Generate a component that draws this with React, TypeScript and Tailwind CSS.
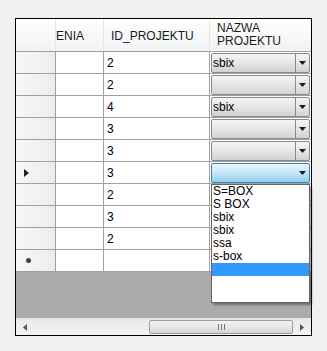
import React from "react";

const rows: { id: string; combo: string; current?: boolean; isNew?: boolean }[] = [
  { id: "2", combo: "sbix" },
  { id: "2", combo: "" },
  { id: "4", combo: "sbix" },
  { id: "3", combo: "" },
  { id: "3", combo: "" },
  { id: "3", combo: "", current: true },
  { id: "2", combo: "" },
  { id: "3", combo: "" },
  { id: "2", combo: "" },
  { id: "", combo: "", isNew: true },
];

const items = ["S=BOX", "S BOX", "sbix", "sbix", "ssa", "s-box", ""];

function Arrow() {
  return (
    <svg width="7" height="4" viewBox="0 0 7 4">
      <path d="M0 0 L7 0 L3.5 4 Z" fill="#1a1a1a" />
    </svg>
  );
}

function Combo({ text, active }: { text: string; active?: boolean }) {
  return (
    <div
      className={
        "ml-[1px] mt-[1px] h-[20px] w-[99px] flex rounded-[2px] border " +
        (active
          ? "border-[#3c7fb1] bg-gradient-to-b from-[#eaf6fd] via-[#c4e6f8] to-[#8fcbee]"
          : "border-[#8a8a8a] bg-gradient-to-b from-[#f4f4f4] via-[#e6e6e6] to-[#d2d2d2]")
      }
    >
      <div className="flex-1 flex items-center pl-[1px] text-[12px] leading-none text-black">
        {text}
      </div>
      <div
        className={
          "w-[14px] flex items-center justify-center border-l " +
          (active ? "border-transparent" : "border-[#8a8a8a]")
        }
      >
        <Arrow />
      </div>
    </div>
  );
}

export default function App() {
  return (
    <div
      className="relative w-[327px] h-[351px] bg-[#f0f0f0] pt-[18px] pl-[15px]"
      style={{ fontFamily: '"Liberation Sans", Arial, sans-serif' }}
    >
      <div className="w-[297px] h-[318px] border border-black bg-[#ababab] flex flex-col overflow-hidden">
        {/* header */}
        <div className="flex h-[33px] border-b border-[#a0a0a0] bg-gradient-to-b from-[#ffffff] to-[#f1f2f4] text-[12px] text-[#1a1a1a]">
          <div className="w-[40px] border-r border-[#e6e6e6]" />
          <div className="w-[48px] border-r border-[#e6e6e6] flex items-center">
            <span className="pt-[1px]">ENIA</span>
          </div>
          <div className="w-[106px] border-r border-[#e6e6e6] flex items-center pl-[7px] pt-[1px]">
            ID_PROJEKTU
          </div>
          <div className="w-[101px] flex flex-col justify-center pl-[7px] leading-[13px]">
            <span>NAZWA</span>
            <span>PROJEKTU</span>
          </div>
        </div>
        {/* rows */}
        {rows.map((r, i) => (
          <div key={i} className="flex h-[22px] border-b border-[#a0a0a0] bg-white text-[12px] text-black">
            <div className="w-[40px] border-r border-[#a0a0a0] bg-gradient-to-r from-[#f7f7f7] via-[#f2f2f2] to-[#ececec] flex items-center pl-[8px]">
              {r.current && (
                <svg width="5" height="8" viewBox="0 0 5 8">
                  <path d="M0 0 L5 4 L0 8 Z" fill="#222" />
                </svg>
              )}
              {r.isNew && (
                <svg width="7" height="7" viewBox="0 0 7 7" className="ml-[1px]">
                  <circle cx="3.5" cy="3.5" r="2.5" fill="#444" />
                </svg>
              )}
            </div>
            <div className="w-[48px] border-r border-[#a0a0a0]" />
            <div className="w-[106px] border-r border-[#a0a0a0] flex items-center pl-[3px] pt-[1px]">
              {r.id}
            </div>
            <div className="w-[100px]">
              {!r.isNew && <Combo text={r.combo} active={r.current} />}
            </div>
          </div>
        ))}
        <div className="flex-1" />
        {/* horizontal scrollbar */}
        <div className="h-[17px] flex bg-gradient-to-b from-[#e9e9e9] to-[#f3f3f3] border-t border-[#e6e6e6]">
          <div className="w-[17px] flex items-center justify-center">
            <svg width="4" height="7" viewBox="0 0 4 7">
              <path d="M4 0 L0 3.5 L4 7 Z" fill="#555" />
            </svg>
          </div>
          <div className="w-[116px]" />
          <div className="w-[144px] mt-[1px] mb-[1px] rounded-[2px] border border-[#9c9c9c] bg-gradient-to-b from-[#f2f2f2] via-[#e8e8e8] to-[#d6d6d6] flex items-center justify-center">
            <svg width="7" height="6" viewBox="0 0 7 6">
              <rect x="0" y="0" width="1" height="6" fill="#777" />
              <rect x="3" y="0" width="1" height="6" fill="#777" />
              <rect x="6" y="0" width="1" height="6" fill="#777" />
            </svg>
          </div>
          <div className="flex-1 flex items-center justify-center">
            <svg width="4" height="7" viewBox="0 0 4 7">
              <path d="M0 0 L4 3.5 L0 7 Z" fill="#555" />
            </svg>
          </div>
        </div>
      </div>

      {/* dropdown list */}
      <div className="absolute left-[211px] top-[184px] w-[99px] h-[119px] bg-white border border-[#646464] shadow-[2px_2px_2px_rgba(0,0,0,0.35)] text-[12px] text-black">
        {items.map((t, i) => (
          <div
            key={i}
            className={
              "h-[13px] leading-[13px] pl-[1px] " + (i === items.length - 1 ? "bg-[#3399ff]" : "")
            }
          >
            {t}
          </div>
        ))}
      </div>
    </div>
  );
}
